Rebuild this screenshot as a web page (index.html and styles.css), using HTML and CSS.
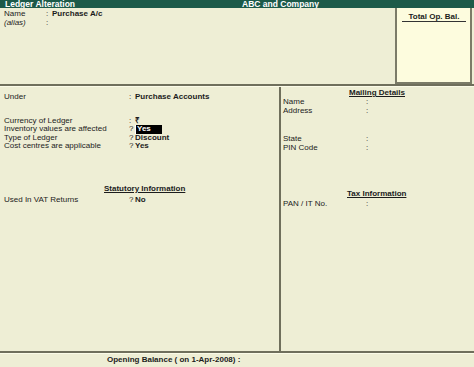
FILE: index.html
```html
<!DOCTYPE html>
<html lang="en">
<head>
    <meta charset="UTF-8">
    <meta name="viewport" content="width=device-width, initial-scale=1.0">
    <title>Ledger Alteration</title>
    <link rel="stylesheet" href="styles.css">
</head>
<body>
    <div class="screen">
        <div class="titlebar">
            <span class="title-left">Ledger Alteration</span>
            <span class="title-mid">ABC and Company</span>
        </div>

        <div class="top">
            <div class="top-main">
                <div class="row">
                    <span class="lbl-short">Name</span>
                    <span class="colon">:</span>
                    <span class="val">Purchase A/c</span>
                </div>
                <div class="row">
                    <span class="lbl-short alias">(alias)</span>
                    <span class="colon">:</span>
                </div>
            </div>
            <div class="opbal">
                <div class="opbal-head">Total Op. Bal.</div>
            </div>
        </div>

        <div class="rule"></div>

        <div class="middle">
            <div class="col-left">
                <div class="row under">
                    <span class="lbl">Under</span>
                    <span class="colon">:</span>
                    <span class="val">Purchase Accounts</span>
                </div>

                <div class="group">
                    <div class="row">
                        <span class="lbl">Currency of Ledger</span>
                        <span class="colon">:</span>
                        <span class="val">₹</span>
                    </div>
                    <div class="row">
                        <span class="lbl">Inventory values are affected</span>
                        <span class="colon">?</span>
                        <span class="val"><span class="cursor">Yes</span></span>
                    </div>
                    <div class="row">
                        <span class="lbl">Type of Ledger</span>
                        <span class="colon">?</span>
                        <span class="val">Discount</span>
                    </div>
                    <div class="row">
                        <span class="lbl">Cost centres are applicable</span>
                        <span class="colon">?</span>
                        <span class="val">Yes</span>
                    </div>
                </div>

                <div class="section-head statutory">Statutory Information</div>
                <div class="row">
                    <span class="lbl">Used In VAT Returns</span>
                    <span class="colon">?</span>
                    <span class="val">No</span>
                </div>
            </div>

            <div class="col-right">
                <div class="section-head mailing">Mailing Details</div>
                <div class="row">
                    <span class="lbl-addr">Name</span>
                    <span class="colon">:</span>
                </div>
                <div class="row">
                    <span class="lbl-addr">Address</span>
                    <span class="colon">:</span>
                </div>

                <div class="group state">
                    <div class="row">
                        <span class="lbl-addr">State</span>
                        <span class="colon">:</span>
                    </div>
                    <div class="row">
                        <span class="lbl-addr">PIN Code</span>
                        <span class="colon">:</span>
                    </div>
                </div>

                <div class="section-head tax">Tax Information</div>
                <div class="row">
                    <span class="lbl-addr">PAN / IT No.</span>
                    <span class="colon">:</span>
                </div>
            </div>
        </div>

        <div class="rule"></div>

        <div class="footer">
            <span class="footer-text">Opening Balance ( on 1-Apr-2008) :</span>
        </div>
    </div>
</body>
</html>
```

FILE: styles.css
```css
* {
    box-sizing: border-box;
}

body {
    margin: 0;
    padding: 0;
    background-color: #eeeed5;
    font-family: "Liberation Sans", Arial, sans-serif;
    font-size: 8px;
    color: #1c1c1c;
}

.screen {
    width: 474px;
    height: 367px;
    overflow: hidden;
    display: flex;
    flex-direction: column;
}

/* barra de titulo */
.titlebar {
    height: 8px;
    background-color: #1c5a49;
    color: #fff;
    font-weight: bold;
    font-size: 8.5px;
    line-height: 8px;
    display: flex;
    align-items: flex-end;
    overflow: hidden;
    flex-shrink: 0;
}

.title-left {
    padding-left: 5px;
    width: 242px;
}

.title-mid {
    width: 100px;
}

.top {
    height: 76px;
    display: flex;
    flex-shrink: 0;
}

.top-main {
    flex: 1;
    padding: 2px 0 0 4px;
}

.opbal {
    width: 77px;
    margin-right: 2px;
    background-color: #fdfcde;
    border-left: 2px solid #7b7b68;
    border-right: 2px solid #7b7b68;
    border-bottom: 2px solid #7b7b68;
    padding: 4px 4px 0 5px;
}

.opbal-head {
    font-weight: bold;
    text-align: center;
    line-height: 9px;
    border-bottom: 1px solid #333;
}

.row {
    display: flex;
    line-height: 8.5px;
    height: 8.5px;
    white-space: nowrap;
}

.lbl-short {
    width: 42px;
}

.alias {
    font-style: italic;
}

.lbl {
    width: 125px;
}

.lbl-addr {
    width: 83px;
}

.colon {
    width: 5px;
}

.val {
    font-weight: bold;
    padding-left: 1px;
}

.cursor {
    display: inline-block;
    width: 27px;
    background-color: #000;
    color: #fff;
    padding-left: 1px;
    border-left: 1px solid #fff;
}

.rule {
    height: 3px;
    border-top: 2px solid #6f6f5c;
    border-bottom: 1px solid #fbfbe8;
    flex-shrink: 0;
}

.middle {
    height: 264px;
    display: flex;
    flex-shrink: 0;
}

.col-left {
    width: 281px;
    border-right: 2px solid #6f6f5c;
    padding: 6px 0 0 4px;
}

.col-right {
    flex: 1;
    padding: 1px 0 0 2px;
}

.group {
    margin-top: 15px;
}

.state {
    margin-top: 20px;
}

.section-head {
    font-weight: bold;
    text-decoration: underline;
    line-height: 9px;
    height: 10px;
}

.statutory {
    margin: 33px 0 2px 100px;
}

.mailing {
    padding-left: 66px;
}

.tax {
    margin-top: 37px;
    padding-left: 64px;
    height: 10.5px;
}

.footer {
    flex: 1;
    padding: 1px 0 0 107px;
}

.footer-text {
    font-weight: bold;
}
```
